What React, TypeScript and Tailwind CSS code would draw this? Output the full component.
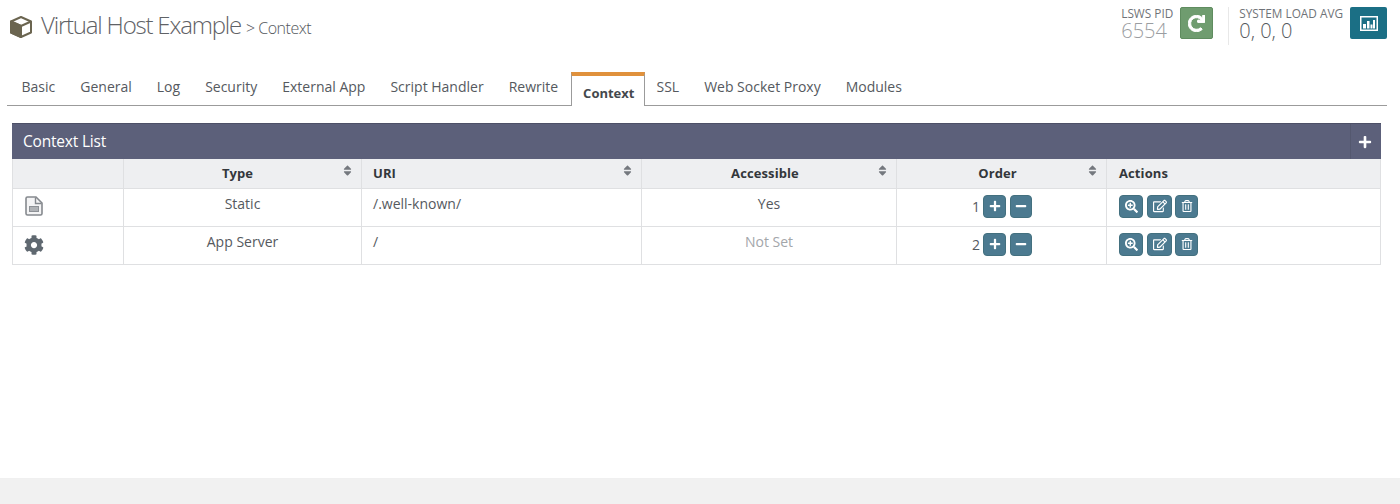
import type { ReactElement, ReactNode } from "react";
import { FaCog, FaMinus, FaPlus, FaRedo, FaRegEdit, FaRegTrashAlt, FaSearchPlus, FaSort } from "react-icons/fa";

const tabs = ["Basic", "General", "Log", "Security", "External App", "Script Handler", "Rewrite", "Context", "SSL", "Web Socket Proxy", "Modules"];

const cellClass = "border-r border-[#dfe0e2] last:border-r-0";
const iconButtonClass = "grid h-[23px] place-items-center rounded-[4px] border border-[#43707f] bg-[#4c7a90] text-white";

function CubeIcon(): ReactElement {
  return (
    <svg viewBox="0 0 24 24" className="h-[24px] w-[24px] text-[#6b6550]" fill="none" stroke="currentColor" strokeWidth="2" strokeLinejoin="round">
      <path d="M12 2 22 6.5V17.5L12 22 2 17.5V6.5Z" />
      <path d="M2 6.5 12 11 22 6.5M12 11V22" />
      <path d="M2 6.5 12 11V22L2 17.5Z" fill="currentColor" />
    </svg>
  );
}

function FileIcon(): ReactElement {
  return (
    <svg viewBox="0 0 18 20" className="h-[20px] w-[18px]">
      <path d="M2.5 1h8.5l6 6v10.5a1.5 1.5 0 0 1-1.500 1.500h-13A1.500 1.500 0 0 1 1 17.500v-15A1.500 1.500 0 0 1 2.500 1Z" fill="#f4f4f5" stroke="#85898e" strokeWidth="1.600" />
      <path d="M10.500 1.500V7.500H16.500" fill="none" stroke="#85898e" strokeWidth="1.400" />
      <path d="M4 10h10v6H4z" fill="#8d9196" />
      <path d="M5 12h8M5 14h8" stroke="#e4e5e6" strokeWidth="0.800" />
    </svg>
  );
}

function SortIcon(): ReactElement {
  return <FaSort className="absolute right-[7px] top-[5px] h-[13px] w-[13px] text-[#74787e]" />;
}

function HeadCell({ className, children, sort = true }: { readonly className: string; readonly children?: ReactNode; readonly sort?: boolean }): ReactElement {
  return (
    <div className={`relative flex items-center font-bold text-[13px] tracking-[0.1px] text-[#33373b] ${cellClass} ${className}`}>
      {children}
      {sort ? <SortIcon /> : null}
    </div>
  );
}

function OrderButtons(): ReactElement {
  return (
    <div className="ml-[3px] flex gap-[4px]">
      <button type="button" className={`${iconButtonClass} w-[23px]`}><FaPlus className="h-[12px] w-[12px]" /></button>
      <button type="button" className={`${iconButtonClass} w-[22px]`}><FaMinus className="h-[12px] w-[12px]" /></button>
    </div>
  );
}

function ActionButtons(): ReactElement {
  return (
    <div className="flex gap-[4px]">
      <button type="button" className={`${iconButtonClass} w-[24px]`}><FaSearchPlus className="h-[13px] w-[13px]" /></button>
      <button type="button" className={`${iconButtonClass} w-[25px]`}><FaRegEdit className="h-[14px] w-[14px]" /></button>
      <button type="button" className={`${iconButtonClass} -ml-px w-[23px]`}><FaRegTrashAlt className="h-[12px] w-[12px]" /></button>
    </div>
  );
}

function Row({ icon, type, uri, accessible, muted, order }: {
  readonly icon: ReactNode;
  readonly type: string;
  readonly uri: string;
  readonly accessible: string;
  readonly muted?: boolean;
  readonly order: number;
}): ReactElement {
  return (
    <div className="flex h-[38px] border-t border-[#dfe0e2] text-[14px] text-[#55595e]">
      <div className={`flex w-[111px] items-center pb-[4px] pl-[12px] ${cellClass}`}>{icon}</div>
      <div className={`w-[238px] pt-[4px] text-center ${cellClass}`}>{type}</div>
      <div className={`w-[280px] pt-[4px] pl-[11px] ${cellClass}`}>{uri}</div>
      <div className={`w-[255px] pt-[4px] text-center ${muted ? "text-[#a3a6aa]" : ""} ${cellClass}`}>{accessible}</div>
      <div className={`flex w-[210px] items-center justify-end pr-[74px] pb-[3px] ${cellClass}`}>
        <span>{order}</span>
        <OrderButtons />
      </div>
      <div className="flex flex-1 items-center pb-[3px] pl-[12px]"><ActionButtons /></div>
    </div>
  );
}

export default function App(): ReactElement {
  return (
    <div className="flex h-[504px] flex-col bg-white font-['Open_Sans',sans-serif] text-[#55595e]">
      <div className="flex-1">
        <header className="flex h-[72px] items-start justify-between pr-[13px] pl-[9px]">
          <div className="flex items-center gap-[8px] pt-[11px]">
            <CubeIcon />
            <h1 className="text-[24px] leading-[28px] font-light tracking-[-1.2px] text-[#5f6266]">
              Virtual Host Example <span className="text-[16px] font-light tracking-[-0.5px] text-[#55595e]">&gt; Context</span>
            </h1>
          </div>
          <div className="flex pt-[7px]">
            <div className="flex border-r border-[#e8e8e8] pr-[15px] pb-[3px]">
              <div className="pr-[7px]">
                <div className="text-[11.800px] leading-[13px] text-[#6f7378]">LSWS PID</div>
                <div className="text-[20px] leading-[22px] font-light text-[#9a9da1]">6554</div>
              </div>
              <div className="grid h-[32px] w-[33px] place-items-center rounded-[2px] border border-[#5f8c5f] bg-[#6f9c6f] text-white">
                <FaRedo className="h-[17px] w-[17px]" stroke="currentColor" strokeWidth="30" />
              </div>
            </div>
            <div className="flex pl-[10px]">
              <div className="pr-[7px]">
                <div className="text-[11.800px] leading-[13px] text-[#6f7378]">SYSTEM LOAD AVG</div>
                <div className="text-[20px] leading-[22px] font-light text-[#55595e]">0, 0, 0</div>
              </div>
              <div className="grid h-[32px] w-[37px] place-items-center rounded-[2px] bg-[#1b6f85] text-white">
                <svg viewBox="0 0 18 15" className="h-[15px] w-[18px]" fill="currentColor">
                  <path fillRule="evenodd" d="M0 0h18v15H0zM1.500 1.500v12h15v-12z" />
                  <path d="M3 8h3v4.500H3zM7 5h2.500v7.500H7zM10.500 8.500h2v4h-2zM13 4h2v8.500h-2z" />
                </svg>
              </div>
            </div>
          </div>
        </header>

        <nav className="mr-[13px] ml-[7px] flex h-[34px] items-start border-b border-[#9b9b9b] pl-[2px] text-[14px] text-[#55595e]">
          {tabs.map((tab) => (tab === "Context" ? (
            <div key={tab} className="-mr-px -mb-px h-[34px] border-x border-[#9b9b9b] border-t-[4px] border-t-[#e0913c] bg-white pt-[7px] pr-[9.500px] pl-[11.500px] text-[13px] leading-[20px] font-bold text-[#44484d]">{tab}</div>
          ) : (
            <div key={tab} className="px-[12.5px] pt-[5px] leading-[20px]">{tab}</div>
          )))}
        </nav>

        <section className="mx-[12px] mt-[17px] w-[1369px]">
          <div className="flex h-[36px] items-center justify-between border-t border-[#4d5067] bg-[#5c607a] text-white">
            <div className="pt-[1px] pl-[11px] text-[15.500px] tracking-[-0.2px]">Context List</div>
            <div className="grid h-full w-[31px] place-items-center border-l border-[#54586f] pr-[2px]"><FaPlus className="h-[14px] w-[14px]" /></div>
          </div>
          <div className="border-x border-b border-[#dfe0e2]">
            <div className="flex h-[29px] bg-[#eeeff1]">
              <HeadCell className="w-[111px]" sort={false} />
              <HeadCell className="w-[238px] justify-center pr-[10px]">Type</HeadCell>
              <HeadCell className="w-[280px] pl-[11px]">URI</HeadCell>
              <HeadCell className="w-[255px] justify-center pr-[8px]">Accessible</HeadCell>
              <HeadCell className="w-[210px] justify-center pr-[8px]">Order</HeadCell>
              <HeadCell className="flex-1 pl-[12px]" sort={false}>Actions</HeadCell>
            </div>
            <Row icon={<FileIcon />} type="Static" uri="/.well-known/" accessible="Yes" order={1} />
            <Row icon={<FaCog className="mt-[2px] -ml-px h-[20px] w-[20px] text-[#5f6870]" />} type="App Server" uri="/" accessible="Not Set" muted order={2} />
          </div>
        </section>
      </div>
      <footer className="h-[26px] border-t border-[#f0f0f0] bg-[#f1f1f1]" />
    </div>
  );
}
